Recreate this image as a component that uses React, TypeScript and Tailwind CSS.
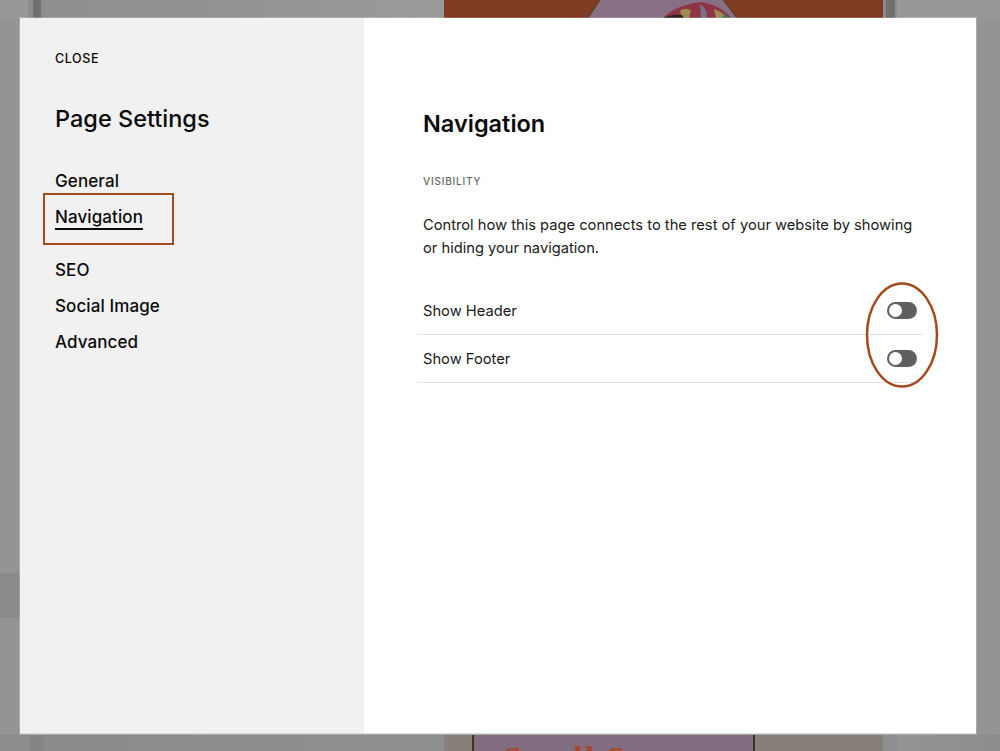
import { useState } from "react";

const navItems = ["General", "Navigation", "SEO", "Social Image", "Advanced"];

function Toggle() {
  return (
    <div className="mb-[2px] flex h-[17px] w-[30px] items-center rounded-full bg-[#5f5f5f] pl-[2px]">
      <div className="h-[13px] w-[13px] rounded-full bg-white" />
    </div>
  );
}

function ToggleRow({ label }: { label: string }) {
  return (
    <div className="flex h-[48px] items-center justify-between border-b border-[#e3e3e3] pl-[6px] pr-[6px] pt-[1px]">
      <span className="text-[14.7px] text-[#1a1a1a]">{label}</span>
      <Toggle />
    </div>
  );
}

function Backdrop() {
  return (
    <div className="flex h-full w-full">
      {/* left of the page behind the dialog */}
      <div className="flex h-full w-[444px] flex-col">
        <div className="flex h-[18px]">
          <div className="w-[28px] bg-[#979797]" />
          <div className="w-[5px] bg-[#8d8d8d]" />
          <div className="w-[8px] bg-[#6f6f6f]" />
          <div className="w-[4px] bg-[#8d8d8d]" />
          <div className="flex-1 bg-gradient-to-r from-[#8e8e8e] to-[#9a9a9a]" />
        </div>
        <div className="flex flex-1 flex-col bg-[#949494]">
          <div className="h-[555px]" />
          <div className="h-[45px] w-[20px] bg-[#8a8a8a]" />
        </div>
        <div className="flex h-[16px]">
          <div className="w-[30px] bg-[#8c8c8c]" />
          <div className="w-[14px] bg-[#858585]" />
          <div className="flex-1 bg-gradient-to-r from-[#8b8b8b] to-[#8f8f8f]" />
        </div>
      </div>

      {/* middle column, the page's artwork */}
      <div className="flex h-full w-[439px] flex-col">
        <div className="h-[18px] bg-[#803c22]">
          <svg width="439" height="18" viewBox="0 0 439 18" className="block">
            <path d="M156 0 L144 18 L293 18 L279 0 Z" fill="#886f86" />
            <path d="M156 0 L144 18 M279 0 L293 18" stroke="#4f3a22" strokeWidth="1" fill="none" />
            <path d="M219 18 C226 10 240 4 257 2 C270 4 281 10 287 18 Z" fill="#8f3445" />
            <path d="M236 11 C240 8 244 8 247 11 L245 18 L238 18 Z" fill="#9c8a4e" />
            <path d="M256 4 C261 7 264 12 262 18 L257 18 Z" fill="#7a6f8c" />
            <path d="M270 9 C276 11 281 14 284 18 L272 18 Z" fill="#9c8a4e" />
            <path d="M280 14 L286 18 L278 18 Z" fill="#3d7561" />
            <path d="M219 18 C224 15 232 14 238 15 L240 18 Z" fill="#2d2420" />
          </svg>
        </div>
        <div className="flex-1 bg-[#949494]" />
        <div className="flex h-[16px] bg-[#87807a]">
          <div className="w-[28px]" />
          <div className="flex-1 border-x-2 border-[#3c3518] bg-[#826c80]">
            <div className="whitespace-nowrap pl-[29px] pt-[7px] font-['Liberation_Serif',serif] text-[34px] font-bold leading-none tracking-[2px] text-[#a5482a]">
              Small S
            </div>
          </div>
          <div className="w-[128px]" />
        </div>
      </div>

      {/* right of the page behind the dialog */}
      <div className="flex h-full flex-1 flex-col">
        <div className="flex h-[18px]">
          <div className="w-[3px] bg-[#8d8d8d]" />
          <div className="w-[9px] bg-[#707070]" />
          <div className="w-[2px] bg-[#8d8d8d]" />
          <div className="flex-1 bg-[#989898]" />
        </div>
        <div className="flex-1 bg-[#949494]" />
        <div className="flex h-[16px]">
          <div className="w-[14px] bg-[#8e8e8e]" />
          <div className="flex-1 bg-gradient-to-r from-[#959595] to-[#8c8c8c]" />
        </div>
      </div>
    </div>
  );
}

export default function App() {
  const [active] = useState("Navigation");

  return (
    <div className="relative h-[751px] w-[1000px] overflow-hidden font-['Inter',sans-serif]">
      <Backdrop />

      {/* Dialog */}
      <div className="absolute left-[20px] top-[18px] flex h-[716px] w-[956px] border-b border-[#dcdcdc] bg-white shadow-[0_0_0_1px_rgba(255,255,255,0.2)]">
        <aside className="flex w-[344px] flex-col bg-[#f1f1f1] pl-[35px]">
          <button className="mt-[34px] self-start text-[12.5px] font-medium leading-[14px] tracking-[0.6px] text-[#0a0a0a]">
            CLOSE
          </button>
          <h2 className="mt-[38px] text-[23.5px] font-medium leading-[30px] text-[#0a0a0a]">Page Settings</h2>
          <nav className="mt-[29px] flex flex-col items-start">
            {navItems.map((item) => (
              <a
                key={item}
                className={
                  item === active
                    ? "mb-[22px] h-[31px] border-b-2 border-[#0a0a0a] text-[17px] font-medium leading-[36px] tracking-[0.1px] text-[#0a0a0a]"
                    : "h-[36px] text-[17px] font-medium leading-[36px] tracking-[0.1px] text-[#0a0a0a]"
                }
              >
                {item}
              </a>
            ))}
          </nav>
        </aside>

        <main className="flex-1 pl-[53px] pr-[53px]">
          <h1 className="mt-[89px] pl-[6px] text-[23.5px] font-semibold leading-[34px] text-[#0a0a0a]">Navigation</h1>
          <div className="mt-[33px] pl-[6px] text-[10px] font-medium leading-[14px] tracking-[0.8px] text-[#666]">
            VISIBILITY
          </div>
          <p className="mt-[26px] pl-[6px] text-[14.7px] leading-[23px] text-[#1a1a1a]">
            Control how this page connects to the rest of your website by showing or hiding your navigation.
          </p>
          <div className="mt-[27px]">
            <ToggleRow label="Show Header" />
            <ToggleRow label="Show Footer" />
          </div>
        </main>
      </div>

      {/* Annotations drawn on top of the screenshot */}
      <div className="absolute left-[43px] top-[193px] h-[52px] w-[131px] border-2 border-[#a5491e]" />
      <svg className="absolute left-[860px] top-[278px]" width="84" height="114" viewBox="0 0 84 114">
        <ellipse cx="42" cy="57" rx="35" ry="51.5" fill="none" stroke="#a3491d" strokeWidth="2.5" />
      </svg>
    </div>
  );
}
